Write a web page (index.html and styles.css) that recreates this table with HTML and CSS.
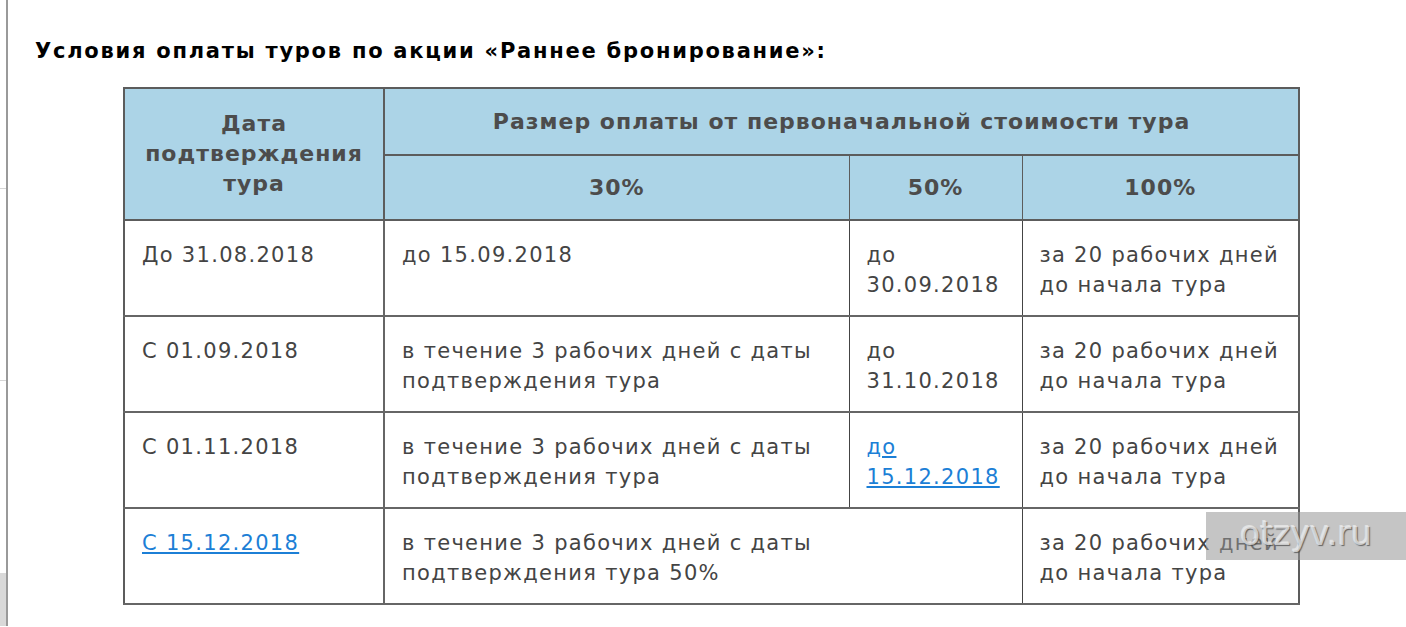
FILE: index.html
```html
<!DOCTYPE html>
<html lang="ru">
<head>
<meta charset="utf-8">
<title>Условия оплаты</title>
<link rel="stylesheet" href="styles.css">
</head>
<body>
<div class="page">
  <div class="edge">
    <div class="tick tick-1"></div>
    <div class="tick tick-2"></div>
    <div class="edge-block"></div>
  </div>
  <main class="content">
    <h2 class="title">Условия оплаты туров по акции «Раннее бронирование»:</h2>
    <table class="pay">
      <colgroup>
        <col class="c1"><col class="c2"><col class="c3"><col class="c4">
      </colgroup>
      <thead>
        <tr>
          <th rowspan="2" class="h-date">Дата<br>подтверждения<br>тура</th>
          <th colspan="3" class="h-top">Размер оплаты от первоначальной стоимости тура</th>
        </tr>
        <tr>
          <th class="h-sub">30%</th>
          <th class="h-sub">50%</th>
          <th class="h-sub">100%</th>
        </tr>
      </thead>
      <tbody>
        <tr>
          <td>До 31.08.2018</td>
          <td>до 15.09.2018</td>
          <td>до 30.09.2018</td>
          <td>за 20 рабочих дней до начала тура</td>
        </tr>
        <tr>
          <td>С 01.09.2018</td>
          <td>в течение 3 рабочих дней с даты подтверждения тура</td>
          <td>до 31.10.2018</td>
          <td>за 20 рабочих дней до начала тура</td>
        </tr>
        <tr>
          <td>С 01.11.2018</td>
          <td>в течение 3 рабочих дней с даты подтверждения тура</td>
          <td><a href="#" class="link">до 15.12.2018</a></td>
          <td>за 20 рабочих дней до начала тура</td>
        </tr>
        <tr>
          <td><a href="#" class="link">С 15.12.2018</a></td>
          <td colspan="2">в течение 3 рабочих дней с даты<br>подтверждения тура 50%</td>
          <td>за 20 рабочих дней до начала тура</td>
        </tr>
      </tbody>
    </table>
  </main>
  <div class="watermark">otzyv.ru</div>
</div>
</body>
</html>
```

FILE: styles.css
```css
* { box-sizing: border-box; }

html, body {
  margin: 0;
  padding: 0;
  background: #fff;
}

body {
  font-family: "DejaVu Sans", Verdana, sans-serif;
}

.page {
  position: relative;
  display: flex;
  width: 1406px;
  height: 627px;
  overflow: hidden;
}

.edge {
  position: relative;
  flex: 0 0 8px;
  height: 626px;
  border-right: 2px solid #9a9a9a;
}

.tick {
  position: absolute;
  left: 0;
  width: 6px;
  height: 1px;
  background: #d6d6d6;
}
.tick-1 { top: 188px; }
.tick-2 { top: 380px; }

.edge-block {
  position: absolute;
  left: 0;
  bottom: 0;
  width: 6px;
  height: 53px;
  background: #d9d9d9;
}

.content {
  flex: 1;
  padding: 37px 0 0 27px;
}

.title {
  margin: 0;
  font-size: 21px;
  font-weight: bold;
  letter-spacing: 1.75px;
  line-height: 28px;
  color: #000;
}

.pay {
  margin: 22px 0 0 88px;
  width: 1175px;
  table-layout: fixed;
  border-collapse: collapse;
  border: 2px solid #5c5c5c;
  font-size: 21px;
  line-height: 30px;
}

.c1 { width: 260px; }
.c2 { width: 465px; }
.c3 { width: 173px; }
.c4 { width: 277px; }

.pay th {
  background: #acd4e7;
  color: #4c4c4c;
  font-size: 22px;
  font-weight: bold;
  letter-spacing: 1px;
  text-align: center;
  vertical-align: middle;
  border: 1px solid #5c5c5c;
  border-bottom-width: 2px;
  padding: 0 6px;
}

.h-top { height: 67px; }
.h-sub { height: 65px; }
.h-date { border-right-width: 2px !important; }

.pay td {
  color: #444;
  letter-spacing: 1.3px;
  vertical-align: top;
  height: 96px;
  padding: 19px 8px 15px 17px;
  border: 1px solid #444;
  border-bottom: 2px solid #666;
}

.pay td:first-child { border-right: 2px solid #666; }

.link {
  color: #1c7fd6;
  text-decoration: underline;
  text-underline-offset: 2px;
}

.watermark {
  position: absolute;
  left: 1206px;
  top: 512px;
  width: 200px;
  height: 48px;
  padding-left: 34px;
  background: rgba(150, 150, 150, 0.55);
  color: rgba(235, 235, 235, 0.75);
  font-size: 33px;
  line-height: 44px;
  text-shadow: 1px 1px 1px rgba(60, 60, 60, 0.7), -1px -1px 0 rgba(255, 255, 255, 0.5);
}
```
